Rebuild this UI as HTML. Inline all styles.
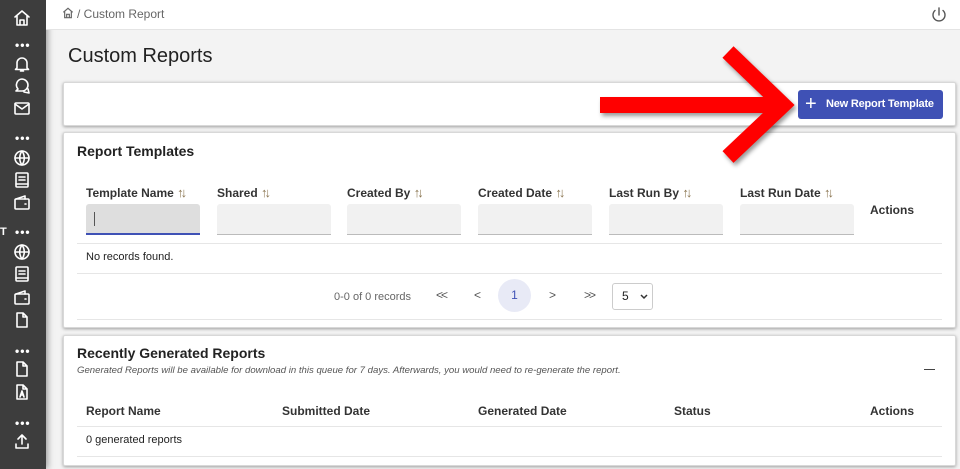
<!DOCTYPE html>
<html><head><style>
*{box-sizing:border-box;margin:0;padding:0}
body{width:960px;height:469px;overflow:hidden;background:#f3f3f3;font-family:"Liberation Sans",sans-serif;color:#222;position:relative}
.a{position:absolute}
.side{left:0;top:0;width:46px;height:469px;background:#3d3d3d;box-shadow:2px 0 6px rgba(0,0,0,.35)}
.side svg{position:absolute;left:13px;width:18px;height:18px;fill:none;stroke:#fff;stroke-width:1.6;stroke-linecap:round;stroke-linejoin:round}
.dots{position:absolute;left:15px;color:#fff;font-size:12px;font-weight:bold;letter-spacing:1px;line-height:6px}
.top{left:46px;top:0;width:914px;height:30px;background:#fff;border-bottom:1px solid #e4e4e4}
.card{left:63px;width:893px;background:#fff;border:1px solid #d8d8d8;box-shadow:0 1px 3px rgba(0,0,0,.35);border-radius:2px}
.th{font-size:12px;font-weight:bold;color:#333;white-space:nowrap}
.s{color:#8a7550;font-weight:normal;font-size:13px;letter-spacing:-3px}
.in{height:31px;width:114px;background:#f1f1f1;border-bottom:1px solid #bbb;border-radius:3px 3px 0 0}
.hr{height:1px;background:#e6e6e6}
</style></head><body>
<div class="a side">
<svg style="top:9px" viewBox="0 0 18 18"><path d="M2 8L9 2l7 6M4 7v9h10V7M7 16v-5h4v5"/></svg>
<div class="dots" style="top:42px">•••</div>
<svg style="top:55px" viewBox="0 0 18 18"><path d="M4 13V8a5 5 0 0110 0v5l1.5 1.5h-13zM7.5 16h3"/></svg>
<svg style="top:77px" viewBox="0 0 18 18"><path d="M9 2a6.5 6 0 016 6c0 3-2.5 6-6 6H3l2-2A6 6 0 019 2zM11 15l5 1-1-4"/></svg>
<svg style="top:99px" viewBox="0 0 18 18"><rect x="2" y="4" width="14" height="11" rx="1"/><path d="M2 5l7 5 7-5"/></svg>
<div class="dots" style="top:135px">•••</div>
<svg style="top:149px" viewBox="0 0 18 18"><circle cx="9" cy="9" r="7"/><path d="M2 9h14M9 2c-3 4-3 10 0 14M9 2c3 4 3 10 0 14"/></svg>
<svg style="top:171px" viewBox="0 0 18 18"><rect x="3" y="2" width="12" height="14" rx="1"/><path d="M6 6h6M6 9h6M3 13h12"/></svg>
<svg style="top:193px" viewBox="0 0 18 18"><rect x="2" y="6" width="14" height="10" rx="1"/><path d="M3 6l9-3v3M12 11h1"/></svg>
<div style="position:absolute;left:0;top:226px;color:#fff;font-size:11px;font-weight:bold">T</div>
<div class="dots" style="top:229px">•••</div>
<svg style="top:243px" viewBox="0 0 18 18"><circle cx="9" cy="9" r="7"/><path d="M2 9h14M9 2c-3 4-3 10 0 14M9 2c3 4 3 10 0 14"/></svg>
<svg style="top:265px" viewBox="0 0 18 18"><rect x="3" y="2" width="12" height="14" rx="1"/><path d="M6 6h6M6 9h6M3 13h12"/></svg>
<svg style="top:288px" viewBox="0 0 18 18"><rect x="2" y="6" width="14" height="10" rx="1"/><path d="M3 6l9-3v3M12 11h1"/></svg>
<svg style="top:311px" viewBox="0 0 18 18"><path d="M4 2h6l4 4v10H4zM10 2v4h4"/></svg>
<div class="dots" style="top:348px">•••</div>
<svg style="top:360px" viewBox="0 0 18 18"><path d="M4 2h6l4 4v10H4zM10 2v4h4"/></svg>
<svg style="top:383px" viewBox="0 0 18 18"><path d="M4 2h6l4 4v10H4zM10 2v4h4M7 14l2-6 2 6M7.5 12h3"/></svg>
<div class="dots" style="top:420px">•••</div>
<svg style="top:432px" viewBox="0 0 18 18"><path d="M9 12V3M5 7l4-4 4 4M3 12v4h12v-4"/></svg>
</div>
<div class="a top">
<svg class="a" style="left:16px;top:7px" width="12" height="12" viewBox="0 0 18 18" fill="none" stroke="#666" stroke-width="1.8"><path d="M2 8L9 2l7 6M4 7v9h10V7M7 16v-5h4v5"/></svg>
<div class="a" style="left:31px;top:7px;font-size:12px;color:#666">/ Custom Report</div>
<svg class="a" style="left:884px;top:6px" width="18" height="18" viewBox="0 0 18 18" fill="none" stroke="#555" stroke-width="1.4" stroke-linecap="round"><path d="M9 2v7M5 4.5a6 6 0 108 0"/></svg>
</div>
<div class="a" style="left:68px;top:45px;font-size:20px;color:#222">Custom Reports</div>
<div class="a card" style="top:82px;height:44px">
<div class="a" style="left:734px;top:7px;width:145px;height:29px;background:#3f51b5;border-radius:3px;color:#fff;font-size:11px;font-weight:bold;line-height:29px;padding-left:28px;white-space:nowrap;letter-spacing:-0.2px">New Report Template
<span class="a" style="left:7px;top:0;font-size:20px;font-weight:normal">+</span></div>
</div>
<div class="a card" style="top:132px;height:196px">
<div class="a" style="left:13px;top:10px;font-size:14px;font-weight:bold">Report Templates</div>
<div class="a th" style="left:22px;top:52px">Template Name <span class="s">↑↓</span></div>
<div class="a th" style="left:153px;top:52px">Shared <span class="s">↑↓</span></div>
<div class="a th" style="left:283px;top:52px">Created By <span class="s">↑↓</span></div>
<div class="a th" style="left:414px;top:52px">Created Date <span class="s">↑↓</span></div>
<div class="a th" style="left:545px;top:52px">Last Run By <span class="s">↑↓</span></div>
<div class="a th" style="left:676px;top:52px">Last Run Date <span class="s">↑↓</span></div>
<div class="a th" style="left:806px;top:70px">Actions</div>
<div class="a in" style="left:22px;top:71px;background:#dedede;border-bottom:2px solid #3f51b5"><div style="position:absolute;left:8px;top:8px;width:1px;height:14px;background:#555"></div></div>
<div class="a in" style="left:153px;top:71px"></div>
<div class="a in" style="left:283px;top:71px"></div>
<div class="a in" style="left:414px;top:71px"></div>
<div class="a in" style="left:545px;top:71px"></div>
<div class="a in" style="left:676px;top:71px"></div>
<div class="a hr" style="left:13px;top:110px;width:865px"></div>
<div class="a" style="left:22px;top:118px;font-size:11px">No records found.</div>
<div class="a hr" style="left:13px;top:140px;width:865px"></div>
<div class="a" style="left:270px;top:158px;font-size:11px;color:#666">0-0 of 0 records</div>
<div class="a" style="left:372px;top:155px;font-size:12px;color:#555;letter-spacing:-2px">&lt;&lt;</div>
<div class="a" style="left:410px;top:155px;font-size:12px;color:#555">&lt;</div>
<div class="a" style="left:434px;top:146px;width:33px;height:33px;border-radius:50%;background:#e8eaf6;color:#3f51b5;font-size:12px;text-align:center;line-height:33px">1</div>
<div class="a" style="left:485px;top:155px;font-size:12px;color:#555">&gt;</div>
<div class="a" style="left:520px;top:155px;font-size:12px;color:#555;letter-spacing:-2px">&gt;&gt;</div>
<div class="a" style="left:548px;top:150px;width:41px;height:27px;border:1px solid #ccc;border-radius:3px;font-size:12px;line-height:25px;padding-left:9px">5
<svg class="a" style="left:27px;top:10px" width="8" height="6" viewBox="0 0 8 6" fill="none" stroke="#333" stroke-width="1.5"><path d="M1 1l3 3 3-3"/></svg></div>
<div class="a hr" style="left:13px;top:186px;width:865px"></div>
</div>
<div class="a card" style="top:335px;height:131px">
<div class="a" style="left:13px;top:9px;font-size:14px;font-weight:bold">Recently Generated Reports</div>
<div class="a" style="left:13px;top:29px;font-size:9.6px;font-style:italic;color:#555;white-space:nowrap">Generated Reports will be available for download in this queue for 7 days. Afterwards, you would need to re-generate the report.</div>
<div class="a" style="left:860px;top:33px;width:11px;height:1px;background:#444"></div>
<div class="a th" style="left:22px;top:68px">Report Name</div>
<div class="a th" style="left:218px;top:68px">Submitted Date</div>
<div class="a th" style="left:414px;top:68px">Generated Date</div>
<div class="a th" style="left:610px;top:68px">Status</div>
<div class="a th" style="left:806px;top:68px">Actions</div>
<div class="a hr" style="left:13px;top:90px;width:865px"></div>
<div class="a" style="left:22px;top:98px;font-size:11px">0 generated reports</div>
<div class="a hr" style="left:13px;top:120px;width:865px"></div>
</div>
<svg class="a" style="left:0;top:0" width="960" height="469">
<g stroke="#f00" stroke-width="16" fill="none" style="filter:drop-shadow(2px 3px 2px rgba(0,0,0,.4))">
<path d="M600 105H780M728 52l55 53-55 52"/>
</g>
</svg>
</body></html>
